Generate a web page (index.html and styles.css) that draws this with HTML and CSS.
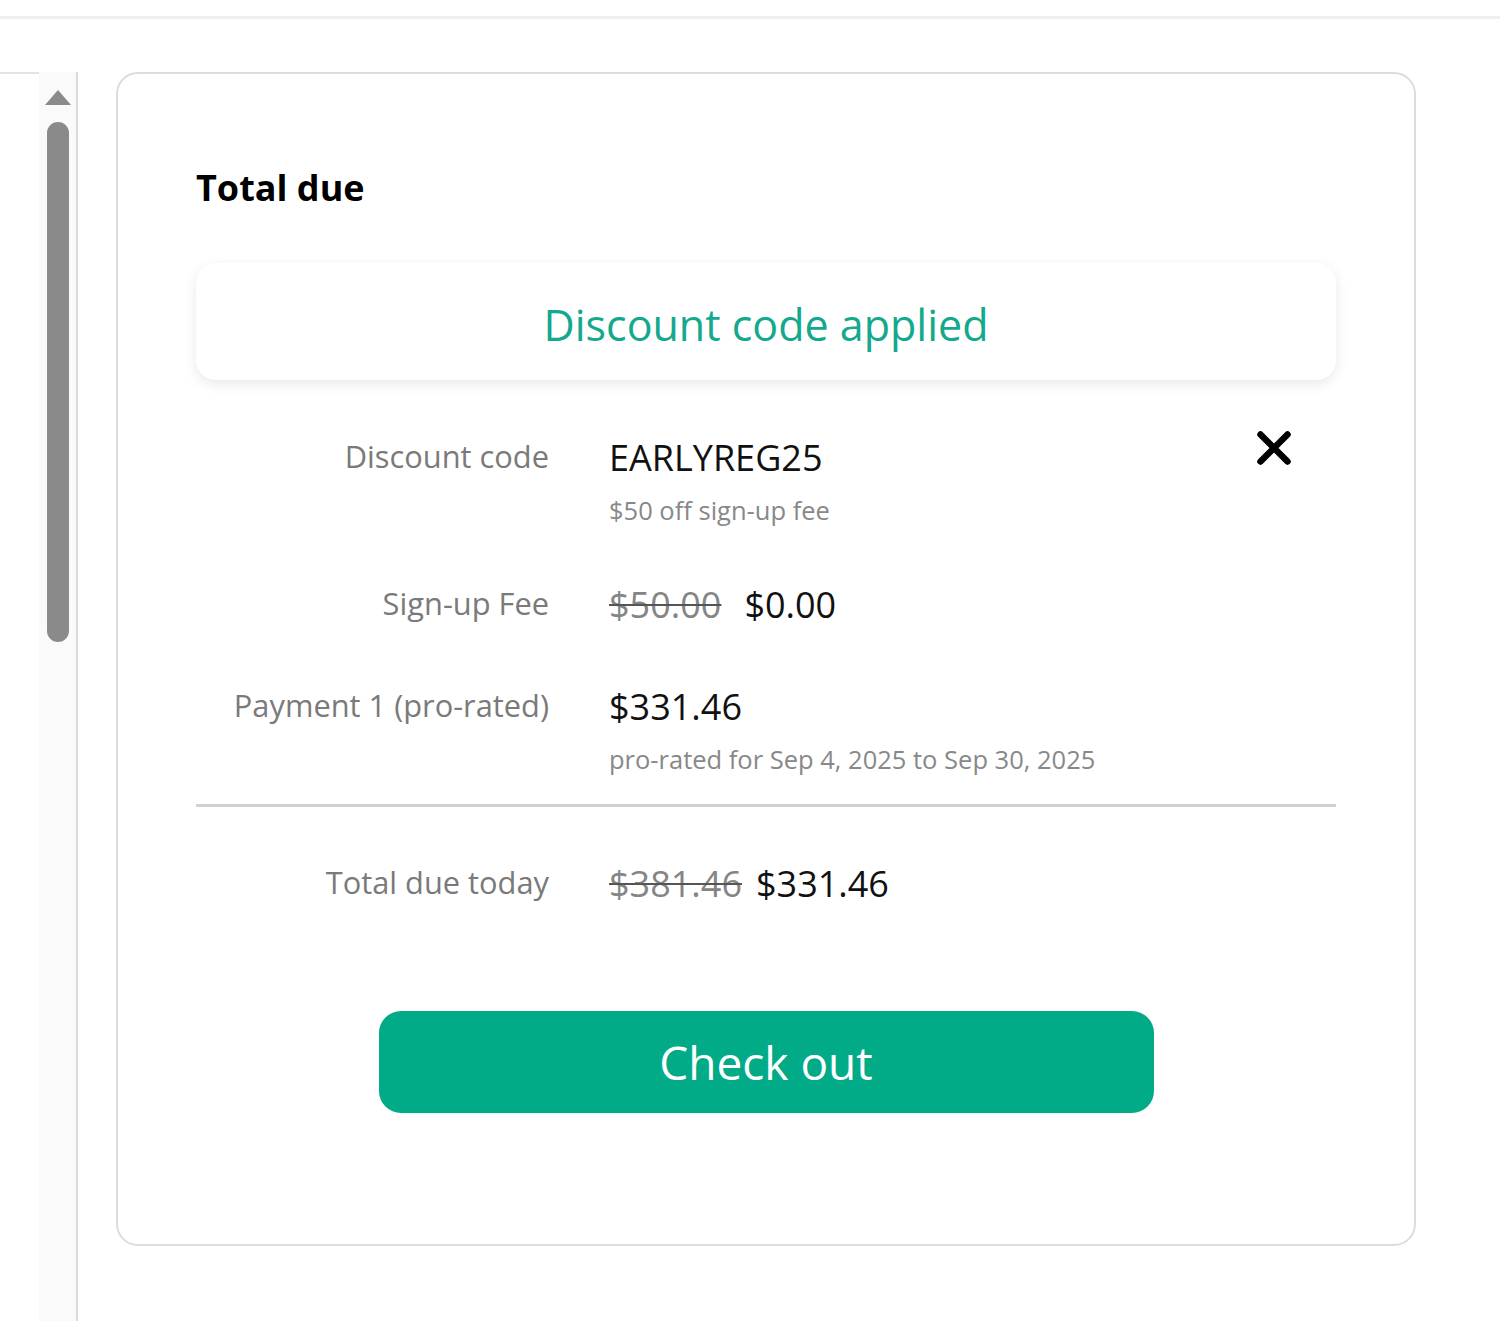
FILE: index.html
```html
<!DOCTYPE html>
<html lang="en">
<head>
    <meta charset="UTF-8">
    <meta name="viewport" content="width=device-width, initial-scale=1.0">
    <title>Total due</title>
    <link rel="stylesheet" href="styles.css">
</head>
<body>
    <div class="topbar"></div>
    <div class="layout">
        <div class="sidebar">
            <div class="sidebar-edge"></div>
            <div class="scrolltrack">
                <div class="scroll-arrow"></div>
                <div class="scroll-thumb"></div>
            </div>
        </div>

        <div class="card">
            <h2 class="card-title">Total due</h2>

            <div class="notice">Discount code applied</div>

            <div class="summary">
                <div class="label">Discount code</div>
                <div class="value">
                    <div class="amount">EARLYREG25</div>
                    <div class="note">$50 off sign-up fee</div>
                </div>
                <button class="remove" aria-label="Remove discount code">
                    <svg width="36" height="34" viewBox="0 0 36 34">
                        <path d="M4.5 3.5 L31.5 30.5 M31.5 3.5 L4.5 30.5" stroke="#000" stroke-width="6.5" stroke-linecap="round" fill="none"/>
                    </svg>
                </button>

                <div class="label">Sign-up Fee</div>
                <div class="value">
                    <div class="amount"><span class="old old-fee">$50.00</span>$0.00</div>
                </div>
                <div></div>

                <div class="label">Payment 1 (pro-rated)</div>
                <div class="value">
                    <div class="amount">$331.46</div>
                    <div class="note">pro-rated for Sep 4, 2025 to Sep 30, 2025</div>
                </div>
                <div></div>
            </div>

            <hr class="divider">

            <div class="summary total">
                <div class="label">Total due today</div>
                <div class="value">
                    <div class="amount"><span class="old">$381.46</span>$331.46</div>
                </div>
                <div></div>
            </div>

            <button class="checkout">Check out</button>
        </div>
    </div>
</body>
</html>
```

FILE: styles.css
```css
body {
    margin: 0;
    font-family: "Open Sans", "Noto Sans", sans-serif;
    background-color: #fff;
    color: #111;
    height: 1321px;
    overflow: hidden;
}
.topbar {
    height: 16px;
    border-bottom: 3px solid #efefef;
}
.layout {
    display: flex;
    align-items: flex-start;
    padding-top: 53px;
}

/* left panel with its scrollbar */
.sidebar {
    display: flex;
    width: 78px;
    height: 1249px;
}
.sidebar-edge {
    width: 39px;
    border-top: 2px solid #e3e3e3;
}
.scrolltrack {
    width: 37px;
    background-color: #fafafa;
    border-right: 2px solid #dadada;
    display: flex;
    flex-direction: column;
    align-items: center;
    padding-top: 18px;
}
.scroll-arrow {
    width: 0;
    height: 0;
    border-left: 13px solid transparent;
    border-right: 13px solid transparent;
    border-bottom: 15px solid #8a8a8a;
}
.scroll-thumb {
    margin-top: 17px;
    width: 22px;
    height: 520px;
    border-radius: 11px;
    background-color: #8a8a8a;
}

/* card */
.card {
    margin-left: 38px;
    width: 1300px;
    height: 1174px;
    box-sizing: border-box;
    border: 2px solid #dcdcdc;
    border-radius: 22px;
    padding: 89px 78px 0;
    display: flex;
    flex-direction: column;
}
.card-title {
    margin: 0;
    font-size: 36px;
    line-height: 50px;
    font-weight: 700;
    color: #000;
}
.notice {
    margin-top: 50px;
    padding: 33px 0 26px;
    border-radius: 20px;
    background-color: #fff;
    box-shadow: 0 4px 14px rgba(0, 0, 0, 0.09);
    text-align: center;
    font-size: 43px;
    line-height: 58px;
    color: #14a88c;
}

.summary {
    display: grid;
    grid-template-columns: 353px 1fr auto;
    column-gap: 60px;
    row-gap: 54px;
    margin-top: 54px;
}
.label {
    text-align: right;
    font-size: 30.8px;
    line-height: 42px;
    color: #7a7a7a;
    padding-top: 1px;
}
.amount {
    font-size: 36px;
    line-height: 48px;
    color: #111;
}
.note {
    margin-top: 11px;
    font-size: 25.5px;
    line-height: 34px;
    color: #888;
}
.old {
    color: #858585;
    text-decoration: line-through;
    text-decoration-color: #555;
    text-decoration-thickness: 2px;
    margin-right: 14px;
}
.old-fee {
    margin-right: 23px;
}
.remove {
    border: none;
    background: none;
    padding: 0;
    margin: -3px 44px 0 0;
    width: 36px;
    height: 34px;
    cursor: pointer;
}

.divider {
    margin: 28px 0 0;
    border: none;
    height: 3px;
    background-color: #cfd1d5;
}
.summary.total {
    margin-top: 53px;
}

.checkout {
    align-self: center;
    margin-top: 103px;
    width: 775px;
    height: 102px;
    border: none;
    border-radius: 22px;
    background-color: #02ab87;
    color: #fff;
    font-family: "Open Sans", "Noto Sans", sans-serif;
    font-size: 46px;
    cursor: pointer;
}
```
